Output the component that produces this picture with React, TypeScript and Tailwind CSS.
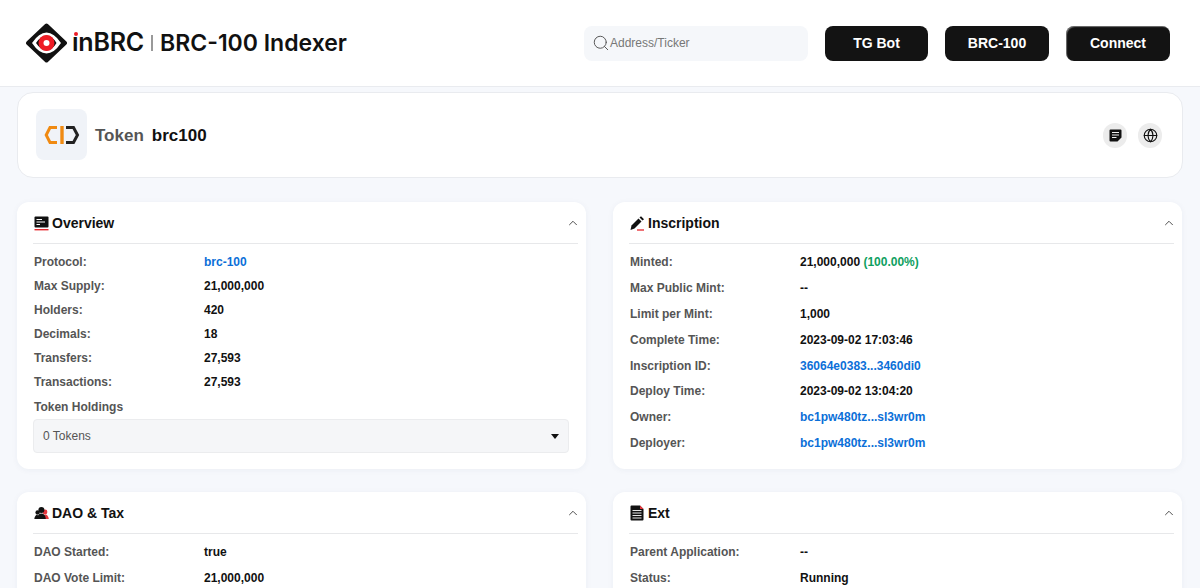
import { ChevronUp, Globe, Search } from 'lucide-react';
import type { ReactNode } from 'react';

type Row = { label: string; value: ReactNode };

const link = 'text-[#0b6fd8]';

const overview: Row[] = [
  { label: 'Protocol:', value: <span className={link}>brc-100</span> },
  { label: 'Max Supply:', value: '21,000,000' },
  { label: 'Holders:', value: '420' },
  { label: 'Decimals:', value: '18' },
  { label: 'Transfers:', value: '27,593' },
  { label: 'Transactions:', value: '27,593' },
];

const inscription: Row[] = [
  { label: 'Minted:', value: <>21,000,000 <span className="text-[#0ea05f]">(100.00%)</span></> },
  { label: 'Max Public Mint:', value: '--' },
  { label: 'Limit per Mint:', value: '1,000' },
  { label: 'Complete Time:', value: '2023-09-02 17:03:46' },
  { label: 'Inscription ID:', value: <span className={link}>36064e0383...3460di0</span> },
  { label: 'Deploy Time:', value: '2023-09-02 13:04:20' },
  { label: 'Owner:', value: <span className={link}>bc1pw480tz...sl3wr0m</span> },
  { label: 'Deployer:', value: <span className={link}>bc1pw480tz...sl3wr0m</span> },
];

const dao: Row[] = [
  { label: 'DAO Started:', value: 'true' },
  { label: 'DAO Vote Limit:', value: '21,000,000' },
];

const ext: Row[] = [
  { label: 'Parent Application:', value: '--' },
  { label: 'Status:', value: 'Running' },
];

function Logo() {
  return (
    <svg width="43" height="40" viewBox="0 0 43 40" className="shrink-0">
      <path d="M21.5 2.5 L40 20 L21.5 37.5 L3 20 Z" fill="#111" stroke="#111" strokeWidth="4" strokeLinejoin="round" />
      <path d="M7 20 Q14 9.5 21.5 9.5 Q29 9.5 36 20 L31.5 20 Q27 12.5 21.5 12.5 Q16 12.5 11 20 Z" fill="#fff" />
      <path d="M7 20 Q14 30.5 21.5 30.5 Q29 30.5 36 20 L31.5 20 Q27 27.5 21.5 27.5 Q16 27.5 11 20 Z" fill="#fff" />
      <circle cx="21.5" cy="20" r="8" fill="#ee1c25" />
      <circle cx="21.5" cy="20" r="3" fill="#fff" />
    </svg>
  );
}

function TokenMark() {
  return (
    <svg width="36" height="20" viewBox="0 0 36 20">
      <path d="M13 2.5 H6 L2.2 10 L6 17.5 H13" fill="none" stroke="#f08a12" strokeWidth="3" />
      <path d="M18 1 V19" stroke="#f08a12" strokeWidth="3.4" />
      <path d="M22 2.5 H29.5 L33.5 10 L29.5 17.5 H22" fill="none" stroke="#222" strokeWidth="3" />
    </svg>
  );
}

function NoteIcon() {
  return (
    <svg width="13" height="13" viewBox="0 0 13 13">
      <path d="M1.5 0.5 H11.5 A1 1 0 0 1 12.5 1.5 V8.5 L8.5 12.5 H1.5 A1 1 0 0 1 0.5 11.5 V1.5 A1 1 0 0 1 1.5 0.5 Z" fill="#111" />
      <path d="M3 3.5 H10 M3 6 H10 M3 8.5 H7.5" stroke="#eee" strokeWidth="1.1" />
    </svg>
  );
}

function OverviewIcon() {
  return (
    <svg width="15" height="15" viewBox="0 0 15 15">
      <rect x="0.5" y="0.5" width="14" height="11" rx="1" fill="#111" />
      <path d="M2.5 3.5 H8 M2.5 6 H11 M2.5 8.5 H6" stroke="#fff" strokeWidth="1.1" />
      <path d="M0.5 13.7 H14.5" stroke="#e5262c" strokeWidth="1.4" />
    </svg>
  );
}

function PenIcon() {
  return (
    <svg width="15" height="15" viewBox="0 0 15 15">
      <path d="M0.5 14 L1.5 9.5 L8.5 2.5 L11.5 5.5 L4.5 12.5 Z" fill="#111" />
      <path d="M9.5 1.5 L11 0.2 L14 3.2 L12.5 4.5 Z" fill="#111" />
      <path d="M7 14 H14" stroke="#e5262c" strokeWidth="1.3" />
    </svg>
  );
}

function DaoIcon() {
  return (
    <svg width="15" height="14" viewBox="0 0 15 14">
      <circle cx="11" cy="6" r="2.4" fill="#e5363c" />
      <path d="M8 13 Q9 8.5 11.5 8.5 Q14 8.5 14.8 13 Z" fill="#e5363c" />
      <circle cx="3.6" cy="6.4" r="2.2" fill="#111" />
      <path d="M0.3 13 Q0.8 9 3.5 8.5 L5 13 Z" fill="#111" />
      <circle cx="7.4" cy="4" r="3" fill="#111" />
      <path d="M3 13 Q3.5 7.5 7.4 7.5 Q11.3 7.5 11.8 13 Z" fill="#111" />
    </svg>
  );
}

function ExtIcon() {
  return (
    <svg width="14" height="16" viewBox="0 0 14 16" className="mr-[1px]">
      <path d="M1.5 0.5 H10 L13.5 4 V14.5 A1 1 0 0 1 12.5 15.5 H1.5 A1 1 0 0 1 0.5 14.5 V1.5 A1 1 0 0 1 1.5 0.5 Z" fill="#111" />
      <path d="M10 0.5 L13.5 4 H10 Z" fill="#e5363c" />
      <path d="M2.5 5.5 H11.5 M2.5 8 H11.5 M2.5 10.5 H11.5 M2.5 13 H11.5" stroke="#fff" strokeWidth="0.9" />
    </svg>
  );
}

function Panel({ icon, title, rows, rowClass, bodyClass, children }: { icon: ReactNode; title: string; rows: Row[]; rowClass: string; bodyClass: string; children?: ReactNode }) {
  return (
    <section className="rounded-xl bg-white pb-[13px] pl-[16px] pr-[8px] shadow-[0_1px_6px_rgba(40,60,100,0.05)]">
      <div className="flex h-[42px] items-center justify-between border-b border-[#e7e8ea] pl-[1px]">
        <div className="flex items-center gap-[3px] pt-[1px] text-[14px] font-bold text-[#111]">
          {icon}
          <span>{title}</span>
        </div>
        <ChevronUp className="-mr-0.5 h-3.5 w-3.5 text-[#444]" strokeWidth={1.6} aria-hidden />
      </div>
      <div className={bodyClass}>
        {rows.map((row) => (
          <div key={row.label} className={`flex items-center pl-[1px] text-[12px] font-bold ${rowClass}`}>
            <div className="w-[170px] text-[#555]">{row.label}</div>
            <div className="text-[#111]">{row.value}</div>
          </div>
        ))}
        {children}
      </div>
    </section>
  );
}

export default function App() {
  return (
    <div className="h-[588px] overflow-hidden bg-[#f6f8fc] font-['Liberation_Sans',sans-serif]">
      <header className="flex h-[87px] items-center justify-between border-b border-[#e9ebef] bg-white pl-[25px] pr-[30px]">
        <div className="flex items-center font-['Inter',sans-serif] font-semibold text-[#111]">
          <Logo />
          <span className="ml-[4px] text-[25px] tracking-[-0.2px]"><span className="relative">ı<span className="absolute left-[2px] top-[5px] h-[4px] w-[4px] rounded-full bg-[#ee1c25]" /></span>nBRC</span>
          <span className="ml-[7px] h-[16px] w-[2px] bg-[#999]" />
          <span className="ml-[7px] text-[23px]">BRC-100 Indexer</span>
        </div>
        <div className="flex items-center gap-[17px]">
          <div className="flex h-[35px] w-[224px] items-center rounded-lg bg-[#f5f7fa] pl-2 text-[12px] text-[#777]">
            <Search className="h-[18px] w-[18px] text-[#555]" strokeWidth={1.3} aria-hidden />
            <span>Address/Ticker</span>
          </div>
          <button className="h-[35px] w-[103px] rounded-lg bg-[#131313] text-[14px] font-bold text-white">TG Bot</button>
          <button className="h-[35px] w-[104px] rounded-lg bg-[#131313] text-[14px] font-bold text-white">BRC-100</button>
          <button className="h-[35px] w-[104px] rounded-lg bg-[#131313] text-[14px] font-bold text-white shadow-[inset_1px_1px_1px_rgba(255,255,255,0.4)]">Connect</button>
        </div>
      </header>
      <main className="px-[17px] pt-[5px]">
        <div className="flex h-[86px] items-center justify-between rounded-2xl border border-[#e9ebef] bg-white pl-[18px] pr-[20px]">
          <div className="flex items-center">
            <div className="-mt-[1px] flex h-[51px] w-[51px] items-center justify-center rounded-lg bg-[#f0f3f8]">
              <TokenMark />
            </div>
            <span className="ml-2 pt-[1px] text-[17px] font-bold text-[#555]">Token</span>
            <span className="ml-2 pt-[1px] text-[17px] font-bold text-[#111]">brc100</span>
          </div>
          <div className="flex items-center gap-[11px]">
            <div className="flex h-[25px] w-[24px] items-center justify-center rounded-full bg-[#ececec]"><NoteIcon /></div>
            <div className="flex h-[25px] w-[24px] items-center justify-center rounded-full bg-[#ececec]"><Globe className="h-[15px] w-[15px] text-[#111]" strokeWidth={1.8} aria-hidden /></div>
          </div>
        </div>
        <div className="mt-[24px] grid grid-cols-[569px_569px] gap-x-[27px] gap-y-[23px]">
          <Panel icon={<OverviewIcon />} title="Overview" rows={overview} rowClass="h-[24px]" bodyClass="pt-[6px]">
            <div className="mt-[1px] h-[24px] pl-[1px] text-[12px] font-bold leading-[24px] text-[#555]">Token Holdings</div>
            <div className="mr-[9px] flex h-[34px] items-center justify-between rounded-[4px] border border-[#ebecee] bg-[#f5f6f8] px-[9px] text-[12px] text-[#555]">
              <span>0 Tokens</span>
              <span className="h-0 w-0 border-x-[4px] border-t-[5px] border-x-transparent border-t-[#111]" />
            </div>
          </Panel>
          <Panel icon={<PenIcon />} title="Inscription" rows={inscription} rowClass="h-[25.9px]" bodyClass="pt-[5px]" />
          <Panel icon={<DaoIcon />} title="DAO & Tax" rows={dao} rowClass="h-[26px]" bodyClass="pt-[5px]" />
          <Panel icon={<ExtIcon />} title="Ext" rows={ext} rowClass="h-[26px]" bodyClass="pt-[5px]" />
        </div>
      </main>
    </div>
  );
}
